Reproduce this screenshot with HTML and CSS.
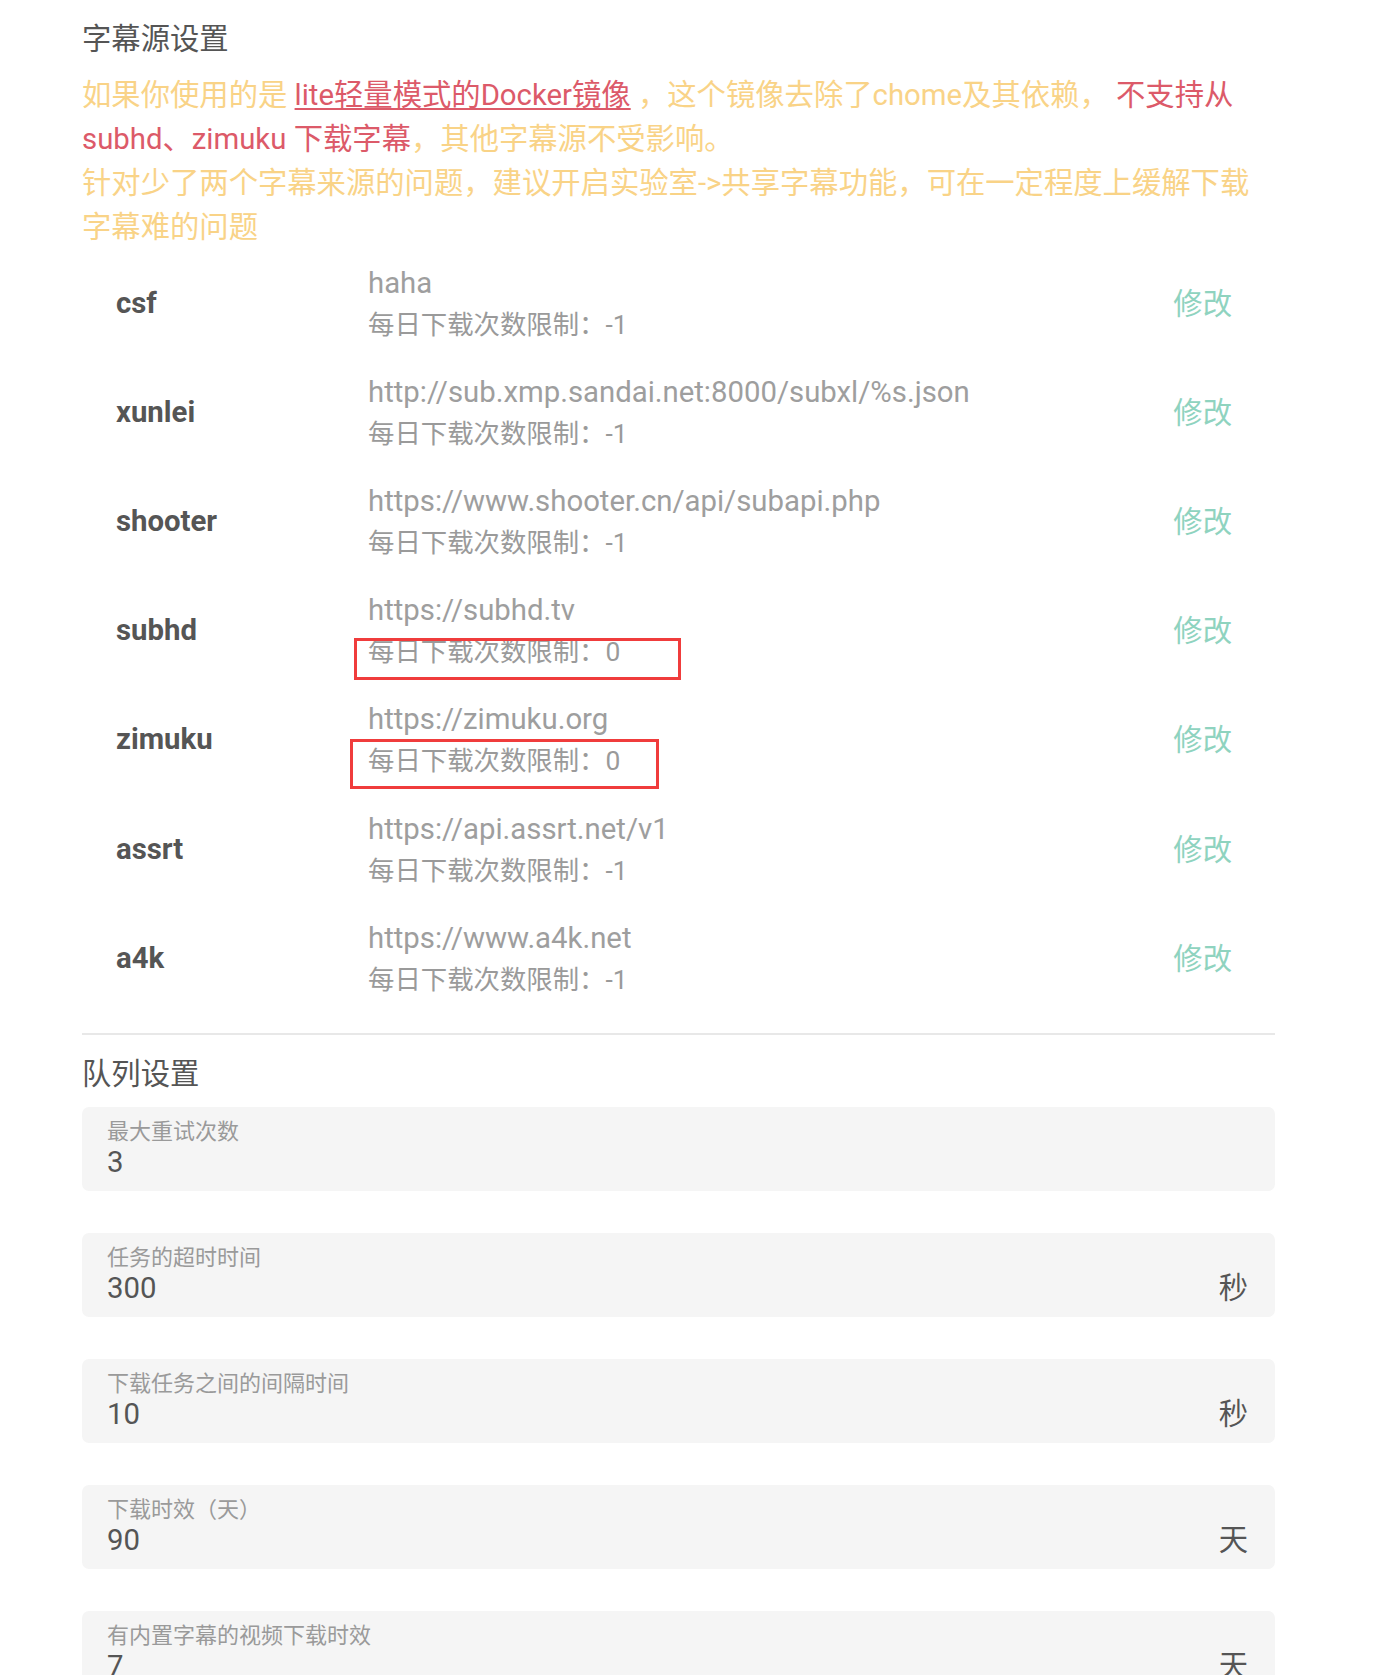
FILE: index.html
```html
<!DOCTYPE html>
<html lang="zh-CN">
<head>
<meta charset="utf-8">
<title>设置</title>
<link rel="stylesheet" href="styles.css">
</head>
<body>
<div class="page">
  <h2 class="section-title">字幕源设置</h2>
  <p class="notice">如果你使用的是 <a class="notice-link" href="#">lite轻量模式的Docker镜像</a> ，这个镜像去除了chome及其依赖， <span class="notice-danger">不支持从 subhd、zimuku 下载字幕</span>，其他字幕源不受影响。<br>针对少了两个字幕来源的问题，建议开启实验室-&gt;共享字幕功能，可在一定程度上缓解下载字幕难的问题</p>

  <ul class="source-list">
    <li class="source-row">
      <div class="source-name">csf</div>
      <div class="source-info">
        <div class="source-url">haha</div>
        <div class="source-limit">每日下载次数限制：-1</div>
      </div>
      <span class="edit-btn">修改</span>
    </li>
    <li class="source-row">
      <div class="source-name">xunlei</div>
      <div class="source-info">
        <div class="source-url">http://sub.xmp.sandai.net:8000/subxl/%s.json</div>
        <div class="source-limit">每日下载次数限制：-1</div>
      </div>
      <span class="edit-btn">修改</span>
    </li>
    <li class="source-row">
      <div class="source-name">shooter</div>
      <div class="source-info">
        <div class="source-url">https://www.shooter.cn/api/subapi.php</div>
        <div class="source-limit">每日下载次数限制：-1</div>
      </div>
      <span class="edit-btn">修改</span>
    </li>
    <li class="source-row">
      <div class="source-name">subhd</div>
      <div class="source-info">
        <div class="source-url">https://subhd.tv</div>
        <div class="source-limit">每日下载次数限制：0</div>
        <div class="mark mark-subhd"></div>
      </div>
      <span class="edit-btn">修改</span>
    </li>
    <li class="source-row">
      <div class="source-name">zimuku</div>
      <div class="source-info">
        <div class="source-url">https://zimuku.org</div>
        <div class="source-limit">每日下载次数限制：0</div>
        <div class="mark mark-zimuku"></div>
      </div>
      <span class="edit-btn">修改</span>
    </li>
    <li class="source-row">
      <div class="source-name">assrt</div>
      <div class="source-info">
        <div class="source-url">https://api.assrt.net/v1</div>
        <div class="source-limit">每日下载次数限制：-1</div>
      </div>
      <span class="edit-btn">修改</span>
    </li>
    <li class="source-row">
      <div class="source-name">a4k</div>
      <div class="source-info">
        <div class="source-url">https://www.a4k.net</div>
        <div class="source-limit">每日下载次数限制：-1</div>
      </div>
      <span class="edit-btn">修改</span>
    </li>
  </ul>

  <hr class="divider">

  <h2 class="section-title">队列设置</h2>
  <div class="fields">
    <div class="field">
      <div class="field-body">
        <div class="field-label">最大重试次数</div>
        <div class="field-value">3</div>
      </div>
    </div>
    <div class="field">
      <div class="field-body">
        <div class="field-label">任务的超时时间</div>
        <div class="field-value">300</div>
      </div>
      <div class="field-suffix">秒</div>
    </div>
    <div class="field">
      <div class="field-body">
        <div class="field-label">下载任务之间的间隔时间</div>
        <div class="field-value">10</div>
      </div>
      <div class="field-suffix">秒</div>
    </div>
    <div class="field">
      <div class="field-body">
        <div class="field-label">下载时效（天）</div>
        <div class="field-value">90</div>
      </div>
      <div class="field-suffix">天</div>
    </div>
    <div class="field">
      <div class="field-body">
        <div class="field-label">有内置字幕的视频下载时效</div>
        <div class="field-value">7</div>
      </div>
      <div class="field-suffix">天</div>
    </div>
  </div>
</div>
</body>
</html>
```

FILE: styles.css
```css
* {
  box-sizing: border-box;
}

html, body {
  margin: 0;
  padding: 0;
  background: #ffffff;
}

body {
  font-family: Roboto, "Noto Sans CJK SC", sans-serif;
  color: #555555;
  overflow: hidden;
}

.page {
  width: 1275px;
  padding-left: 82px;
}

.section-title {
  margin: 0;
  padding-top: 17px;
  font-size: 29.33px;
  line-height: 44px;
  font-weight: 400;
  color: #555555;
}

.notice {
  margin: 12px 0 0;
  font-size: 29.33px;
  line-height: 44px;
  color: #f9d387;
}

.notice-link {
  color: #dc5a69;
  text-decoration: underline;
  text-decoration-thickness: 2px;
  text-underline-offset: 3px;
}

.notice-danger {
  color: #dc5a69;
}

.source-list {
  list-style: none;
  margin: 0;
  padding: 0;
}

.source-row {
  display: flex;
  align-items: center;
  height: 109.2px;
}

.source-name {
  flex: 0 0 286px;
  padding-left: 34px;
  padding-bottom: 2px;
  font-size: 29.33px;
  font-weight: 700;
  color: #555555;
}

.source-info {
  position: relative;
  flex: 1 1 auto;
}

.source-url {
  font-size: 29.33px;
  line-height: 42px;
  color: #9e9e9e;
}

.source-limit {
  font-size: 26.4px;
  line-height: 42px;
  color: #9a9a9a;
}

.edit-btn {
  margin-right: 43px;
  padding-bottom: 6px;
  font-size: 29.33px;
  color: #8fd3bf;
  cursor: pointer;
}

.mark {
  position: absolute;
  border: 3px solid #f03c3c;
}

.mark-subhd {
  left: -14px;
  top: 49px;
  width: 327px;
  height: 42px;
}

.mark-zimuku {
  left: -18px;
  top: 41px;
  width: 309px;
  height: 50px;
}

.divider {
  margin: 20px 0 0;
  border: 0;
  height: 2px;
  background: #e8e8e8;
}

.fields {
  margin-top: 11px;
  display: flex;
  flex-direction: column;
  gap: 42px;
}

.field {
  display: flex;
  align-items: flex-end;
  height: 84px;
  padding: 0 27px 0 25px;
  background: #f5f5f5;
  border-radius: 7px;
}

.field-body {
  flex: 1 1 auto;
  align-self: stretch;
  padding-top: 12px;
}

.field-label {
  font-size: 22px;
  line-height: 26px;
  color: #9a9a9a;
}

.field-value {
  font-size: 29.33px;
  line-height: 34px;
  color: #555555;
}

.field-suffix {
  font-size: 29.33px;
  line-height: 36px;
  padding-bottom: 11px;
  color: #555555;
}
```
